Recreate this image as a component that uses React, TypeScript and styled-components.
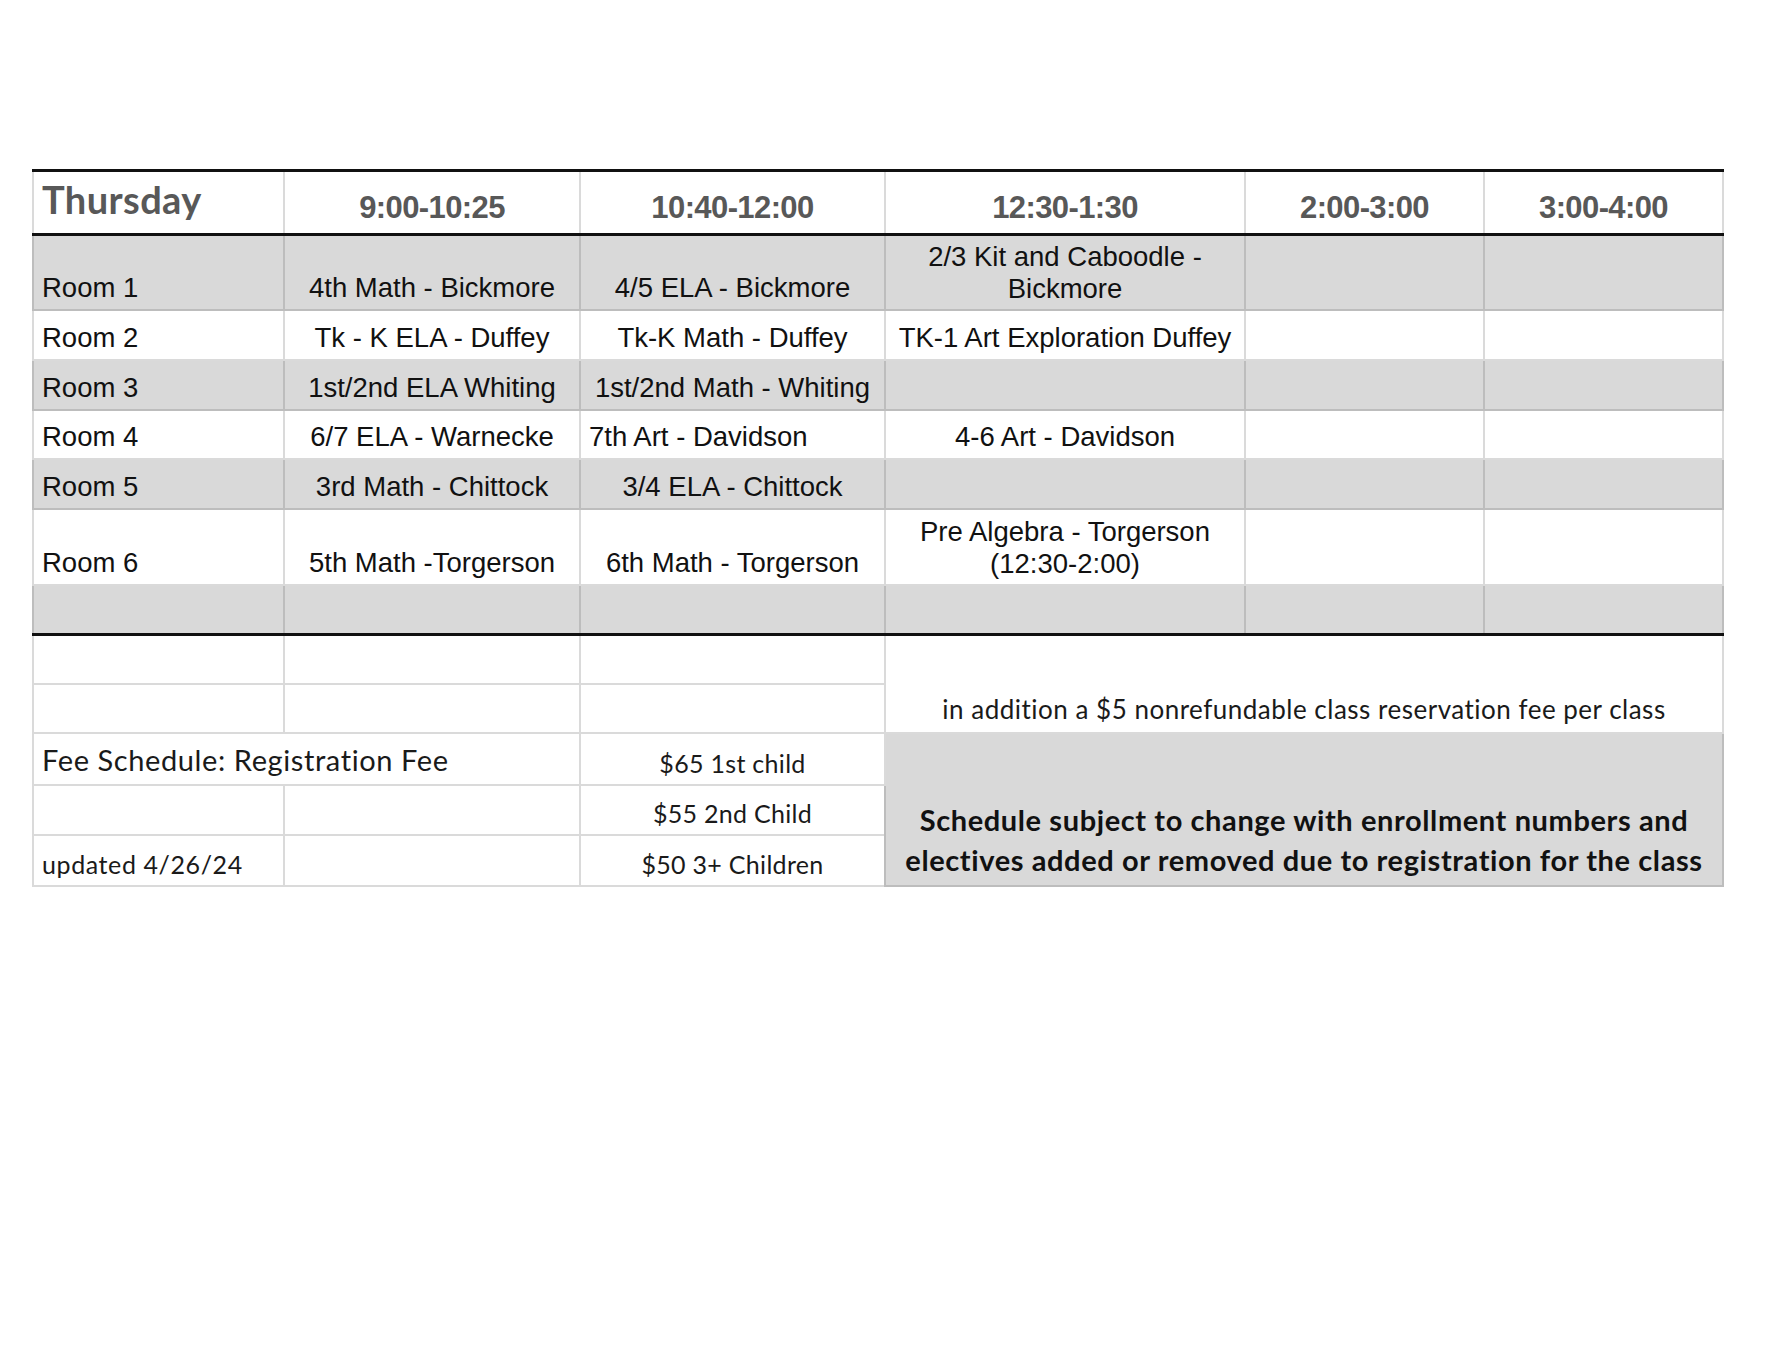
import React from "react";
import styled, { createGlobalStyle, css } from "styled-components";

const GlobalStyle = createGlobalStyle`
  html, body {
    margin: 0;
    padding: 0;
    background: #ffffff;
  }
`;

const ARIAL = `"Liberation Sans", Arial, sans-serif`;
const GOTHIC = `Lato, "Open Sans", sans-serif`;

const Page = styled.div`
  width: 1765px;
  height: 1364px;
  box-sizing: border-box;
  padding: 169px 0 0 32px;
  background: #ffffff;
`;

const Sheet = styled.table`
  border-collapse: collapse;
  table-layout: fixed;
  width: 1690px;
`;

const Row = styled.tr<{ $h: number }>`
  height: ${(p) => p.$h}px;
`;

type CellProps = {
  $gray?: boolean;
  $align?: "left" | "center";
  $topRule?: boolean;
  $bottomRule?: boolean;
};

const cellBase = css<CellProps>`
  box-sizing: border-box;
  padding: 0 8px 5px;
  vertical-align: bottom;
  white-space: nowrap;
  overflow: visible;
  text-align: ${(p) => p.$align ?? "center"};
  background: ${(p) => (p.$gray ? "#d9d9d9" : "#ffffff")};
  border: 2px solid ${(p) => (p.$gray ? "#bdbdbd" : "#dadada")};
  ${(p) => p.$topRule && "border-top: 3px solid #111111;"}
  ${(p) => p.$bottomRule && "border-bottom: 3px solid #111111;"}
`;

const HeadCell = styled.th<CellProps>`
  ${cellBase};
  font-family: ${ARIAL};
  font-weight: 700;
  font-size: 31px;
  letter-spacing: -0.6px;
  line-height: 1.1;
  color: #585858;
  padding-bottom: 8px;
`;

const DayCell = styled(HeadCell)`
  font-family: ${GOTHIC};
  font-size: 38px;
  letter-spacing: 0.4px;
  padding-bottom: 12px;
`;

const ClassCell = styled.td<CellProps>`
  ${cellBase};
  font-family: ${ARIAL};
  font-size: 27.5px;
  line-height: 1.15;
  color: #111111;
`;

const WrapCell = styled(ClassCell)`
  white-space: pre-line;
  padding-bottom: 4px;
`;

const FeeCell = styled.td<CellProps & { $size: number; $spacing?: number }>`
  ${cellBase};
  font-family: ${GOTHIC};
  font-size: ${(p) => p.$size}px;
  letter-spacing: ${(p) => p.$spacing ?? 0.4}px;
  line-height: 1.2;
  color: #1a1a1a;
  padding-bottom: 6px;
`;

const NoticeCell = styled.td<CellProps>`
  ${cellBase};
  font-family: ${GOTHIC};
  font-weight: 700;
  font-size: 29px;
  letter-spacing: 0.6px;
  line-height: 40px;
  color: #111111;
  padding-bottom: 5px;
  white-space: pre-line;
`;

const widths = [251, 296, 305, 360, 239, 239];
const times = ["9:00-10:25", "10:40-12:00", "12:30-1:30", "2:00-3:00", "3:00-4:00"];

type Slot = { text: string; align?: "left" | "center"; wrap?: boolean };
type RoomRow = { room: string; h: number; gray: boolean; slots: Slot[] };

const rooms: RoomRow[] = [
  {
    room: "Room 1",
    h: 75,
    gray: true,
    slots: [
      { text: "4th Math - Bickmore" },
      { text: "4/5 ELA - Bickmore" },
      { text: "2/3 Kit and Caboodle -\nBickmore", wrap: true },
    ],
  },
  {
    room: "Room 2",
    h: 50,
    gray: false,
    slots: [
      { text: "Tk - K ELA - Duffey" },
      { text: "Tk-K Math - Duffey" },
      { text: "TK-1 Art Exploration Duffey" },
    ],
  },
  {
    room: "Room 3",
    h: 50,
    gray: true,
    slots: [{ text: "1st/2nd ELA Whiting" }, { text: "1st/2nd Math - Whiting" }, { text: "" }],
  },
  {
    room: "Room 4",
    h: 49,
    gray: false,
    slots: [
      { text: "6/7 ELA - Warnecke" },
      { text: "7th Art - Davidson", align: "left" },
      { text: "4-6 Art - Davidson" },
    ],
  },
  {
    room: "Room 5",
    h: 50,
    gray: true,
    slots: [{ text: "3rd Math - Chittock" }, { text: "3/4 ELA - Chittock" }, { text: "" }],
  },
  {
    room: "Room 6",
    h: 76,
    gray: false,
    slots: [
      { text: "5th Math -Torgerson" },
      { text: "6th Math - Torgerson" },
      { text: "Pre Algebra - Torgerson\n(12:30-2:00)", wrap: true },
    ],
  },
];

const App: React.FC = () => {
  return (
    <Page>
      <GlobalStyle />
      <Sheet>
        <colgroup>
          {widths.map((w, i) => (
            <col key={i} style={{ width: w }} />
          ))}
        </colgroup>
        <tbody>
          <Row $h={64}>
            <DayCell $align="left" $topRule $bottomRule>
              Thursday
            </DayCell>
            {times.map((t) => (
              <HeadCell key={t} $topRule $bottomRule>
                {t}
              </HeadCell>
            ))}
          </Row>

          {rooms.map((r) => (
            <Row key={r.room} $h={r.h}>
              <ClassCell $gray={r.gray} $align="left">
                {r.room}
              </ClassCell>
              {r.slots.map((s, i) =>
                s.wrap ? (
                  <WrapCell key={i} $gray={r.gray}>
                    {s.text}
                  </WrapCell>
                ) : (
                  <ClassCell key={i} $gray={r.gray} $align={s.align}>
                    {s.text}
                  </ClassCell>
                )
              )}
              <ClassCell $gray={r.gray} />
              <ClassCell $gray={r.gray} />
            </Row>
          ))}

          <Row $h={50}>
            {widths.map((_, i) => (
              <ClassCell key={i} $gray $bottomRule />
            ))}
          </Row>

          <Row $h={49}>
            <ClassCell />
            <ClassCell />
            <ClassCell />
            <FeeCell colSpan={3} rowSpan={2} $size={26} $spacing={0.5}>
              in addition a $5 nonrefundable class reservation fee per class
            </FeeCell>
          </Row>
          <Row $h={49}>
            <ClassCell />
            <ClassCell />
            <ClassCell />
          </Row>

          <Row $h={52}>
            <FeeCell colSpan={2} $align="left" $size={29} $spacing={0.6}>
              Fee Schedule: Registration Fee
            </FeeCell>
            <FeeCell $size={25} $spacing={0.3}>
              $65 1st child
            </FeeCell>
            <NoticeCell colSpan={3} rowSpan={3} $gray>
              {"Schedule subject to change with enrollment numbers and\nelectives added or removed due to registration for the class"}
            </NoticeCell>
          </Row>
          <Row $h={50}>
            <ClassCell />
            <ClassCell />
            <FeeCell $size={25} $spacing={0.3}>
              $55 2nd Child
            </FeeCell>
          </Row>
          <Row $h={51}>
            <FeeCell $align="left" $size={25} $spacing={0.6}>
              updated 4/26/24
            </FeeCell>
            <ClassCell />
            <FeeCell $size={25} $spacing={0.3}>
              $50 3+ Children
            </FeeCell>
          </Row>
        </tbody>
      </Sheet>
    </Page>
  );
};

export default App;
